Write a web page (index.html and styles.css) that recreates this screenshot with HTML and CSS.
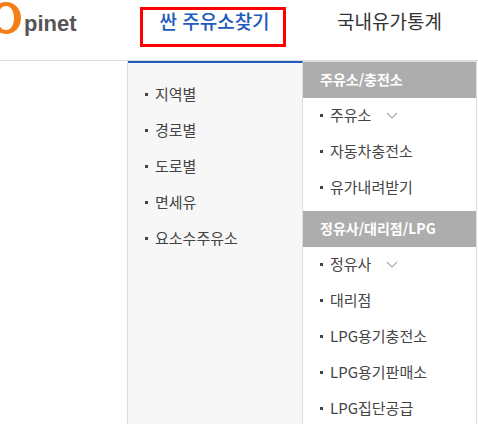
FILE: index.html
```html
<!DOCTYPE html>
<html lang="ko">
<head>
<meta charset="utf-8">
<title>Opinet</title>
<link rel="stylesheet" href="styles.css">
</head>
<body>
<header class="header">
  <div class="logo">
    <svg class="logo-o" width="36" height="34" viewBox="0 0 36 34"><path fill="#f57f17" fill-rule="evenodd" d="M20 1C11 1 5 8 5 17s6 16 15 16 15-7 15-16S29 1 20 1zM20 5c5 0 8 5 8 12s-3 12-8 12-8-5-8-12 3-12 8-12z"/></svg>
    <span class="logo-text">pinet</span>
  </div>
  <nav class="nav">
    <a class="nav-active">싼 주유소찾기</a>
    <a class="nav-item">국내유가통계</a>
  </nav>
</header>
<div class="menu">
  <ul class="col-left">
    <li>지역별</li>
    <li>경로별</li>
    <li>도로별</li>
    <li>면세유</li>
    <li>요소수주유소</li>
  </ul>
  <div class="col-right">
    <h3 class="group">주유소/충전소</h3>
    <ul class="list">
      <li>주유소<svg class="chev" width="12" height="7" viewBox="0 0 12 7"><path d="M1 1l5 5 5-5" fill="none" stroke="#aaa" stroke-width="1.2"/></svg></li>
      <li>자동차충전소</li>
      <li>유가내려받기</li>
    </ul>
    <h3 class="group">정유사/대리점/LPG</h3>
    <ul class="list">
      <li>정유사<svg class="chev" width="12" height="7" viewBox="0 0 12 7"><path d="M1 1l5 5 5-5" fill="none" stroke="#aaa" stroke-width="1.2"/></svg></li>
      <li>대리점</li>
      <li>LPG용기충전소</li>
      <li>LPG용기판매소</li>
      <li>LPG집단공급</li>
    </ul>
  </div>
</div>
</body>
</html>
```
FILE: styles.css
```css
* { box-sizing: border-box; }
html, body { margin: 0; padding: 0; height: 424px; overflow: hidden; background: #fff; }
body { font-family: "Noto Sans CJK KR", "Liberation Sans", sans-serif; color: #444; }
ul { list-style: none; margin: 0; padding: 0; }
.header { height: 61px; border-bottom: 1px solid #ddd; display: flex; align-items: flex-start; }
.logo { width: 154px; margin-left: -14px; padding-top: 1px; display: flex; align-items: flex-start; flex: none; }
.logo-text { font: bold 22px/26px "Liberation Sans", sans-serif; color: #555; margin-top: 10px; margin-left: 2px; }
.logo-o { flex: none; }
.nav { display: flex; padding-top: 7px; }
.nav a { display: block; text-align: center; white-space: nowrap; }
.nav-active { width: 146px; height: 40px; border: 3px solid #f00; padding-left: 3px; color: #2259bd; font-size: 19px; font-weight: 500; line-height: 22px; }
.nav-item { margin-left: 51px; font-size: 19px; line-height: 28px; color: #333; }
.menu { display: flex; margin-left: 127px; height: 363px; border-left: 1px solid #ddd; }
.col-left { width: 175px; background: #f7f7f7; border-top: 2px solid #2259bd; border-right: 1px solid #ddd; padding-top: 13px; flex: none; }
.col-right { width: 174px; border-right: 1px solid #ddd; border-top: 1px solid #ddd; flex: none; }
.group { margin: 0; height: 36px; background: #adadad; color: #fff; font-size: 14px; font-weight: 700; line-height: 34px; padding-left: 17px; }
.list { padding-bottom: 5px; }
.list li, .col-left li { position: relative; font-size: 15px; color: #444; height: 36px; line-height: 36px; padding-left: 27px; }
.list li { line-height: 34px; }
.list li::before, .col-left li::before { content: ""; position: absolute; left: 17px; top: 17px; width: 3px; height: 3px; background: #444; }
.list li::before { top: 16px; }
.chev { margin-left: 15px; vertical-align: 2px; }
```
